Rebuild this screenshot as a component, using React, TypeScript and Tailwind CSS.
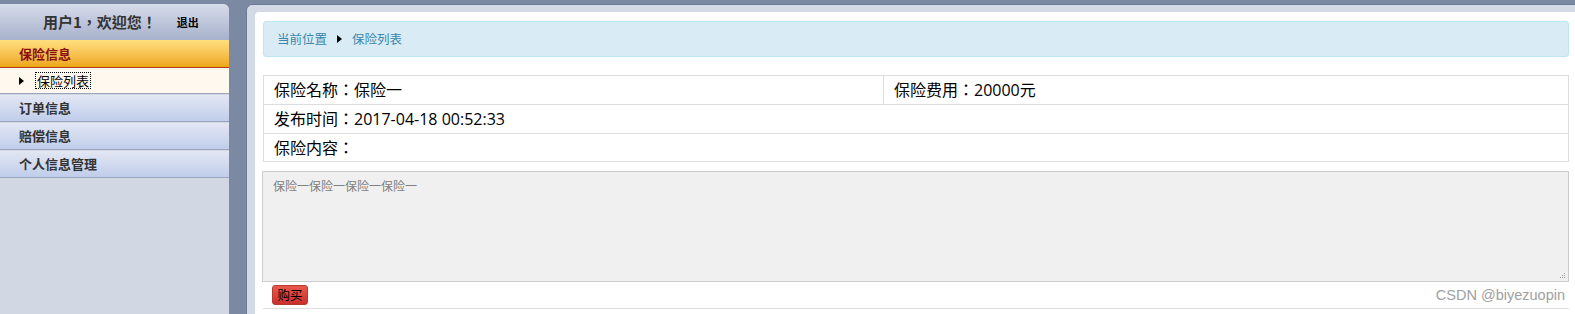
import React from "react";

const CJK = "font-['Noto_Sans_CJK_SC','Noto_Sans',sans-serif]";
const CJK_TC = "font-['Noto_Sans_CJK_TC','Noto_Sans',sans-serif]";
const TABLE_FONT = "font-['Open_Sans','Noto_Sans_CJK_TC',sans-serif]";

const MENU = ["订单信息", "赔偿信息", "个人信息管理"];

function Triangle({ className = "" }: { className?: string }) {
  return (
    <svg width="5" height="8" viewBox="0 0 5 8" className={className}>
      <path d="M0 0 L5 4 L0 8 Z" fill="#000" />
    </svg>
  );
}

function Sidebar() {
  return (
    <div className="flex w-[229px] shrink-0 flex-col overflow-hidden rounded-tr-[6px] bg-[#d1d8e3]">
      <div className="flex h-[36px] items-center bg-gradient-to-b from-[#d6dcea] to-[#a7b1cb]">
        <span className={`ml-[43px] text-[15px] font-bold text-[#333] ${CJK_TC}`}>用户1，欢迎您！</span>
        <span className="ml-[20px] text-[11px] font-bold text-black">退出</span>
      </div>
      <div className="flex h-[28px] items-center border-b border-[#b5391f] bg-gradient-to-b from-[#ffe07e] to-[#eea70f] pl-[19px] text-[13px] font-bold text-[#8a1010]">
        保险信息
      </div>
      <div className="flex h-[26px] items-center border-b border-[#9ca5bd] bg-[#fff8ee] pl-[19px]">
        <Triangle />
        <span className="ml-[11px] border border-dotted border-black px-px text-[13px] leading-[15px] text-black">
          保险列表
        </span>
      </div>
      {MENU.map((m) => (
        <div
          key={m}
          className="mt-px flex h-[27px] items-center border-b border-[#9ca5bd] bg-gradient-to-b from-[#e3e7f3] to-[#c0cdeb] pl-[19px] text-[13px] font-bold text-[#333]"
        >
          {m}
        </div>
      ))}
    </div>
  );
}

function Content() {
  return (
    <div className="flex flex-1 flex-col rounded-tl-[6px] border-l border-t border-[#6c7b95] bg-[#d4dae5] pl-[8px] pt-[7px]">
      <div className="flex flex-1 flex-col rounded-tl-[4px] bg-white pl-[8px] pr-[6px] pt-[9px]">
        <div className="flex h-[36px] items-center gap-[10px] rounded-[3px] border border-[#bde6f0] bg-[#d9ecf5] pl-[13px] text-[12.5px] text-[#3a87ad]">
          <span>当前位置</span>
          <Triangle />
          <span>保险列表</span>
        </div>

        <div className={`mt-[18px] border border-[#dddddd] text-[16px] text-black ${TABLE_FONT}`}>
          <div className="flex h-[29px] border-b border-[#dddddd]">
            <div className="flex w-[620px] items-center border-r border-[#dddddd] pl-[10px]">保险名称：保险一</div>
            <div className="flex flex-1 items-center pl-[10px]">保险费用：20000元</div>
          </div>
          <div className="flex h-[29px] items-center border-b border-[#dddddd] pl-[10px]">
            发布时间：2017-04-18 00:52:33
          </div>
          <div className="flex h-[27px] items-center pl-[10px]">保险内容：</div>
        </div>

        <div className="relative mt-[9px] -ml-px h-[111px] border border-[#cccccc] bg-[#f0f0f0] px-[10px] pt-[5px] text-[12px] text-[#808080]">
          保险一保险一保险一保险一
          <svg width="6" height="6" viewBox="0 0 6 6" className="absolute bottom-[2px] right-[2px]">
            <rect x="4" y="0" width="1" height="1" fill="#999" />
            <rect x="2" y="2" width="1" height="1" fill="#999" />
            <rect x="4" y="2" width="1" height="1" fill="#999" />
            <rect x="0" y="4" width="1" height="1" fill="#999" />
            <rect x="2" y="4" width="1" height="1" fill="#999" />
            <rect x="4" y="4" width="1" height="1" fill="#999" />
          </svg>
        </div>

        <div className="relative flex h-[27px] items-center border-b border-[#dddddd] pl-[9px]">
          <button
            type="button"
            className="flex h-[20px] w-[36px] items-center justify-center rounded-[3px] border border-[#b53a30] bg-gradient-to-b from-[#e8584c] to-[#c9302c] text-[12.5px] text-black"
          >
            购买
          </button>
          <span className="absolute right-[4px] top-[3px] font-['Liberation_Sans',Arial,sans-serif] text-[14.5px] text-[#a0a0a0]">
            CSDN @biyezuopin
          </span>
        </div>
      </div>
    </div>
  );
}

export default function App() {
  return (
    <div className={`flex h-[314px] w-full overflow-hidden bg-[#7b8aa2] pt-[4px] ${CJK}`}>
      <Sidebar />
      <div className="w-[17px] shrink-0" />
      <Content />
    </div>
  );
}
